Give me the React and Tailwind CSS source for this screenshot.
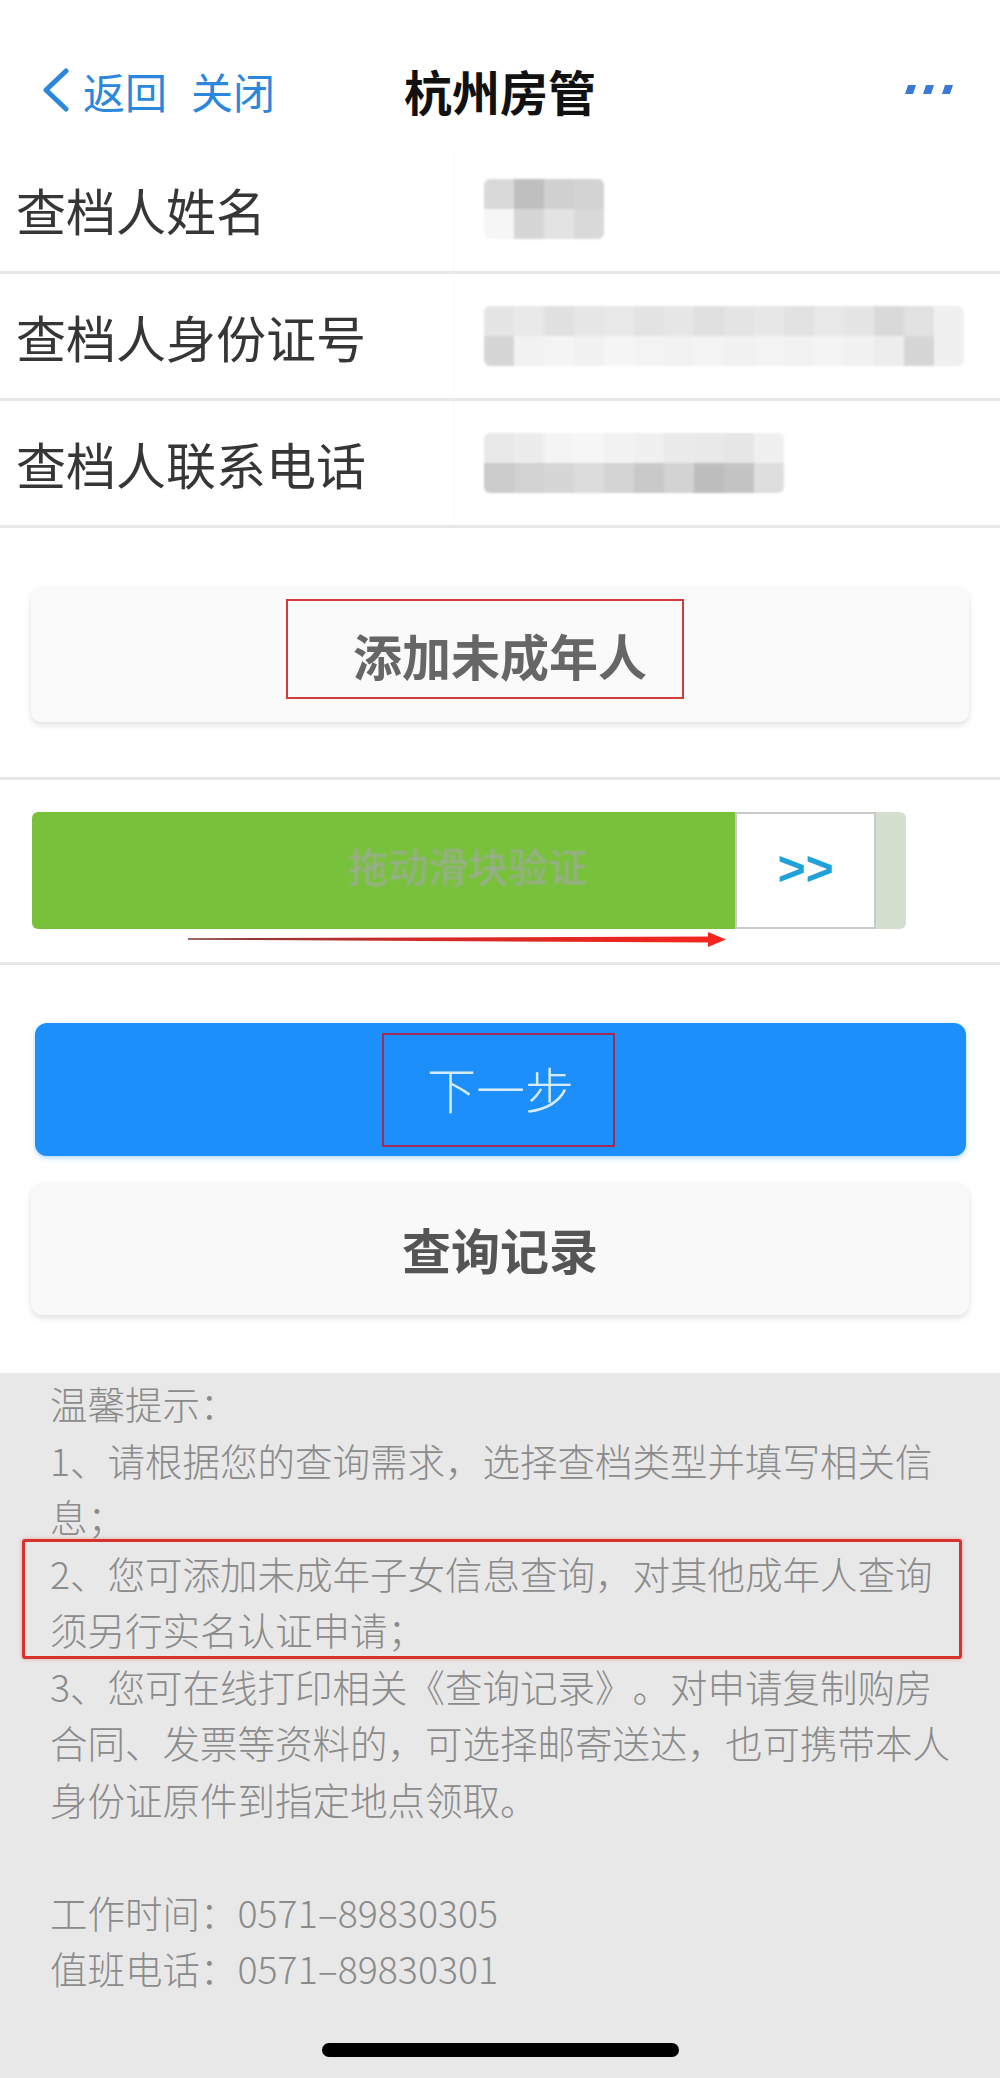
import React from 'react'

const FONT = { fontFamily: '"Noto Sans CJK SC", "Noto Sans", sans-serif' }

const nameCells = [
  ['#d9d9d9', '#bfbfbf', '#d0d0d0', '#d3d3d3'],
  ['#f6f6f6', '#d6d6d6', '#e3e3e3', '#d9d9d9'],
]
const idCells = [
  ['#e5e5e5', '#e9e9e9', '#e1e1e1', '#e6e6e6', '#e8e8e8', '#e3e3e3', '#e6e6e6', '#e0e0e0', '#e4e4e4', '#e7e7e7', '#e2e2e2', '#e8e8e8', '#e5e5e5', '#d9d9d9', '#e2e2e2', '#f0f0f0'],
  ['#d6d6d6', '#f2f2f2', '#f4f4f4', '#f1f1f1', '#f5f5f5', '#f3f3f3', '#f2f2f2', '#f4f4f4', '#f1f1f1', '#f3f3f3', '#f2f2f2', '#f4f4f4', '#f1f1f1', '#ededed', '#d6d6d6', '#f0f0f0'],
]
const phoneCells = [
  ['#e8e8e8', '#ececec', '#f4f4f4', '#f6f6f6', '#f2f2f2', '#f0f0f0', '#eaeaea', '#e9e9e9', '#e6e6e6', '#f0f0f0'],
  ['#cbcbcb', '#d2d2d2', '#d6d6d6', '#dcdcdc', '#d4d4d4', '#c9c9c9', '#d3d3d3', '#bdbdbd', '#c4c4c4', '#dedede'],
]

function Mosaic({ cells }) {
  return (
    <div className="flex flex-col rounded-[6px] overflow-hidden blur-[1px]">
      {cells.map((row, i) => (
        <div key={i} className="flex">
          {row.map((c, j) => (
            <div key={j} className="w-[30px] h-[30px]" style={{ backgroundColor: c }} />
          ))}
        </div>
      ))}
    </div>
  )
}

function FieldRow({ label, cells }) {
  return (
    <div className="h-[127px] flex border-b-[3px] border-[#e7e7e7]">
      <div className="w-[453px] flex items-center pl-[16px] text-[50px] text-[#363636]">{label}</div>
      <div className="flex-1 flex items-center pl-[30px] border-l border-[#fafafa]">
        <Mosaic cells={cells} />
      </div>
    </div>
  )
}

const tips = [
  '温馨提示：',
  '1、请根据您的查询需求，选择查档类型并填写相关信',
  '息；',
]
const tipsBoxed = ['2、您可添加未成年子女信息查询，对其他成年人查询', '须另行实名认证申请；']
const tipsRest = [
  '3、您可在线打印相关《查询记录》。对申请复制购房',
  '合同、发票等资料的，可选择邮寄送达，也可携带本人',
  '身份证原件到指定地点领取。',
  '\u00a0',
  '工作时间：0571–89830305',
  '值班电话：0571–89830301',
]

export default function App() {
  return (
    <div className="w-[1000px] min-h-[2078px] flex flex-col bg-white [text-spacing-trim:space-all]" style={FONT}>
      {/* Nav */}
      <div className="h-[147px] pt-[34px]">
        <div className="h-[112px] flex items-center">
          <div className="w-[300px] flex items-center pl-[40px] text-[42px] text-[#2b87dc]">
            <svg width="30" height="44" viewBox="0 0 30 44" className="mr-[13px]">
              <path d="M26 3 L6 22 L26 41" fill="none" stroke="#2b87dc" strokeWidth="5" strokeLinecap="round" strokeLinejoin="round" />
            </svg>
            <span>返回</span>
            <span className="ml-[24px]">关闭</span>
          </div>
          <div className="flex-1 text-center text-[48px] font-bold text-[#111]">杭州房管</div>
          <div className="w-[300px] flex justify-end pr-[47px]">
            <svg width="48" height="10" viewBox="0 0 48 10">
              <polygon points="3,0 11,0 8,9 0,9" fill="#3a7ad6" />
              <polygon points="21,0 29,0 26,9 18,9" fill="#3a7ad6" />
              <polygon points="40,0 48,0 45,9 37,9" fill="#3a7ad6" />
            </svg>
          </div>
        </div>
      </div>

      {/* Fields */}
      <FieldRow label="查档人姓名" cells={nameCells} />
      <FieldRow label="查档人身份证号" cells={idCells} />
      <FieldRow label="查档人联系电话" cells={phoneCells} />

      {/* Add minor */}
      <div className="pt-[59px] pb-[55px] border-b-[3px] border-[#e7e7e7]">
        <div className="relative mx-[31px] h-[135px] rounded-[10px] bg-[#fafafa] shadow-[0_3px_6px_rgba(0,0,0,0.12)] flex items-center justify-center">
          <span className="text-[49px] font-bold text-[#666]">添加未成年人</span>
          <div className="absolute left-[255px] top-[12px] w-[398px] h-[100px] border-2 border-[#d23a3a]" />
        </div>
      </div>

      {/* Slider */}
      <div className="pt-[32px] pb-[33px] border-b-[3px] border-[#e7e7e7]">
        <div className="relative ml-[32px] w-[874px] h-[117px] flex rounded-[6px]">
          <div className="w-[703px] h-full bg-[#78c23b] rounded-l-[6px]" />
          <div className="w-[141px] h-full bg-white border-2 border-[#cacaca] flex items-center justify-center">
            <span className="text-[48px] font-bold text-[#1fa2d9] leading-none -mt-[4px]" style={{ fontFamily: '"Liberation Sans", sans-serif' }}>&gt;&gt;</span>
          </div>
          <div className="flex-1 h-full bg-[#d5dfcf] rounded-r-[6px]" />
          <div className="absolute inset-0 flex items-center justify-center pr-[2px] text-[40px] text-[#9eaa98] pointer-events-none">
            <span className="-mt-[12px] blur-[0.8px]">拖动滑块验证</span>
          </div>
          <svg className="absolute left-[156px] top-[117px]" width="540" height="20" viewBox="0 0 540 20">
            <defs>
              <linearGradient id="arr" x1="0" x2="1" y1="0" y2="0">
                <stop offset="0" stopColor="#7d3b3b" />
                <stop offset="0.45" stopColor="#d32a25" />
                <stop offset="1" stopColor="#f2261f" />
              </linearGradient>
            </defs>
            <polygon points="0,9.3 524,7.5 524,13.5 0,10.7" fill="url(#arr)" />
            <polygon points="520,3 538,10.5 520,18" fill="#f2261f" />
          </svg>
        </div>
      </div>

      {/* Buttons */}
      <div className="pt-[58px] pb-[58px] flex flex-col gap-[27px]">
        <div className="relative ml-[35px] mr-[34px] h-[133px] rounded-[12px] bg-[#1c8ffb] shadow-[0_2px_5px_rgba(28,143,251,0.35)] flex items-center justify-center">
          <span className="text-[49px] font-extralight text-[#d7ebff] -mt-[4px]">下一步</span>
          <div className="absolute left-[347px] top-[10px] w-[233px] h-[114px] border-2 border-[#9e2c57]" />
        </div>
        <div className="mx-[31px] h-[132px] rounded-[12px] bg-[#f9f9f9] shadow-[0_3px_6px_rgba(0,0,0,0.12)] flex items-center justify-center">
          <span className="text-[49px] font-bold text-[#555]">查询记录</span>
        </div>
      </div>

      {/* Tips */}
      <div className="flex-1 bg-[#e8e8e8] pt-[2px] pl-[50px] pr-[40px] text-[37.5px] leading-[56.5px] font-light text-[#8b8b8b]">
        {tips.map((t, i) => (
          <div key={i} className="whitespace-nowrap">{t}</div>
        ))}
        <div className="relative">
          {tipsBoxed.map((t, i) => (
            <div key={i} className="whitespace-nowrap">{t}</div>
          ))}
          <div className="absolute -left-[28px] -right-[2px] -top-[6px] -bottom-[1px] border-[3px] border-[#d8322d] rounded-[3px] shadow-[0_0_4px_rgba(216,50,45,0.35)]" />
        </div>
        {tipsRest.map((t, i) => (
          <div key={i} className="whitespace-nowrap">{t}</div>
        ))}
        <div className="flex justify-center mt-[46px] pb-[21px] -ml-[50px] -mr-[40px]">
          <div className="w-[357px] h-[14px] rounded-full bg-black" />
        </div>
      </div>
    </div>
  )
}
